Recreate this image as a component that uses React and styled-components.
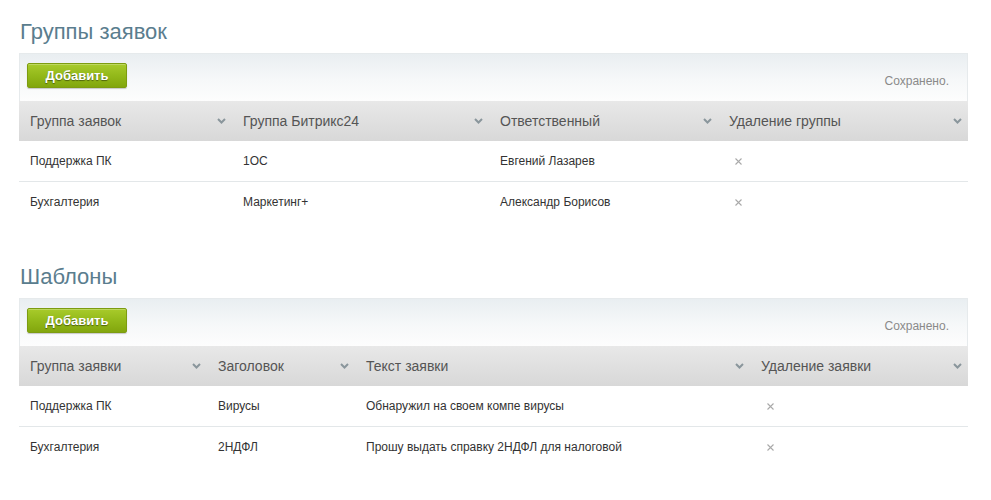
import React from "react";
import styled, { createGlobalStyle } from "styled-components";

const Global = createGlobalStyle`
  html, body { margin: 0; padding: 0; background: #fff; }
  body { font-family: "Liberation Sans", Arial, sans-serif; }
`;

const Page = styled.div`
  padding: 20px 23px 0 19px;
`;

const Section = styled.section`
  margin-bottom: 43px;
`;

const Title = styled.h2`
  margin: 0 0 9px 1px;
  font-size: 22px;
  line-height: 24px;
  font-weight: normal;
  color: #5a7d8e;
`;

const Toolbar = styled.div`
  display: flex;
  justify-content: space-between;
  align-items: flex-start;
  border: 1px solid #e6eaec;
  border-bottom: none;
  background: linear-gradient(to bottom, #e9eef1 0%, #f6f8f9 55%, #fdfdfd 100%);
  padding: 9px 18px 0 7px;
  box-sizing: border-box;
  height: 48px;
`;

const AddButton = styled.button`
  width: 100px;
  height: 25px;
  border: 1px solid #7d9c10;
  border-radius: 2px;
  background: linear-gradient(to bottom, #a8cb2b 0%, #93b91a 50%, #82a60d 100%);
  box-shadow: 0 1px 1px rgba(0, 0, 0, 0.2), inset 0 1px 0 rgba(255, 255, 255, 0.25);
  color: #fff;
  font-family: "Liberation Sans", Arial, sans-serif;
  font-weight: bold;
  font-size: 13px;
  text-shadow: 0 1px 1px rgba(0, 0, 0, 0.45);
  cursor: pointer;
  padding: 0;
`;

const Saved = styled.span`
  margin-top: 11px;
  font-size: 12px;
  line-height: 14px;
  color: #8a8a8a;
`;

const Grid = styled.div`
  display: grid;
  grid-template-columns: ${(p) => p.$cols};
`;

const HeadCell = styled.div`
  height: 40px;
  display: flex;
  align-items: center;
  justify-content: space-between;
  padding: 0 6px 0 11px;
  background: linear-gradient(to bottom, #e8e8e8 0%, #d8d8d8 100%);
  font-size: 14px;
  color: #555;
`;

const Cell = styled.div`
  display: flex;
  align-items: center;
  padding-left: 11px;
  font-size: 12px;
  color: #333;
  border-bottom: ${(p) => (p.$last ? "none" : "1px solid #e3e7e9")};
  box-sizing: border-box;
  height: ${(p) => (p.$last ? "40px" : "41px")};
`;

const DelIcon = styled.span`
  margin-left: 6px;
  display: inline-flex;
  cursor: pointer;
`;

const Chevron = () => (
  <svg width="9" height="6" viewBox="0 0 9 6">
    <path d="M1 1 L4.5 4.5 L8 1" fill="none" stroke="#8a969c" strokeWidth="2" />
  </svg>
);

const Cross = () => (
  <DelIcon>
    <svg width="7" height="7" viewBox="0 0 7 7">
      <path d="M0.5 0.5 L6.5 6.5 M6.5 0.5 L0.5 6.5" stroke="#a9a9a9" strokeWidth="1.1" />
    </svg>
  </DelIcon>
);

const Table = ({ cols, headers, rows }) => (
  <Grid $cols={cols}>
    {headers.map((h) => (
      <HeadCell key={h}>
        <span>{h}</span>
        <Chevron />
      </HeadCell>
    ))}
    {rows.map((r, i) =>
      r.concat([null]).map((c, j) => (
        <Cell key={i + "-" + j} $last={i === rows.length - 1}>
          {c === null ? <Cross /> : c}
        </Cell>
      ))
    )}
  </Grid>
);

const Block = ({ title, cols, headers, rows }) => (
  <Section>
    <Title>{title}</Title>
    <Toolbar>
      <AddButton>Добавить</AddButton>
      <Saved>Сохранено.</Saved>
    </Toolbar>
    <Table cols={cols} headers={headers} rows={rows} />
  </Section>
);

export default function App() {
  return (
    <Page>
      <Global />
      <Block
        title="Группы заявок"
        cols="213px 257px 229px 1fr"
        headers={["Группа заявок", "Группа Битрикс24", "Ответственный", "Удаление группы"]}
        rows={[
          ["Поддержка ПК", "1ОС", "Евгений Лазарев"],
          ["Бухгалтерия", "Маркетинг+", "Александр Борисов"],
        ]}
      />
      <Block
        title="Шаблоны"
        cols="188px 148px 395px 1fr"
        headers={["Группа заявки", "Заголовок", "Текст заявки", "Удаление заявки"]}
        rows={[
          ["Поддержка ПК", "Вирусы", "Обнаружил на своем компе вирусы"],
          ["Бухгалтерия", "2НДФЛ", "Прошу выдать справку 2НДФЛ для налоговой"],
        ]}
      />
    </Page>
  );
}
